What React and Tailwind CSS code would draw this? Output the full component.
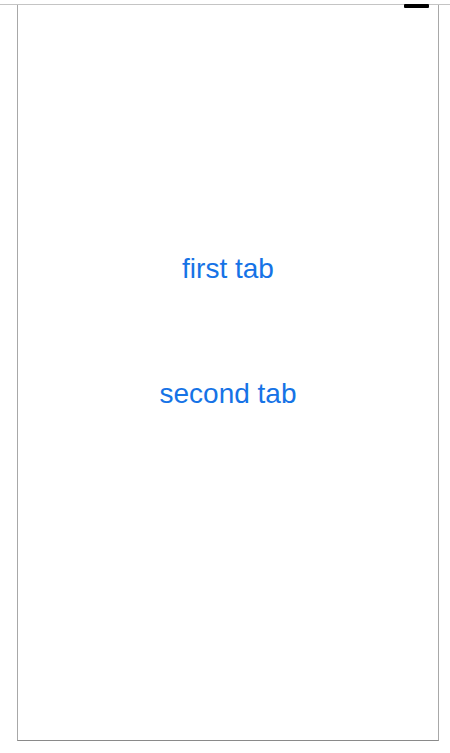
import React from 'react';

export default function App() {
  return (
    <div className="relative w-[450px] h-[753px] bg-white overflow-hidden" style={{ fontFamily: '"Liberation Sans", Arial, sans-serif' }}>
      {/* top rule */}
      <div className="mt-[4px] h-px bg-[#c4c4c4]" />

      {/* frame */}
      <div className="ml-[17px] w-[422px] h-[736px] border-x border-b border-x-[#a8a8a8] border-b-[#8a8a8a] flex flex-col items-center pt-[247px] gap-[91px]">
        <button className="text-[28px] leading-[34px] text-[#1673e6]">first tab</button>
        <button className="text-[28px] leading-[34px] text-[#1673e6]">second tab</button>
      </div>

      {/* little black bar top right */}
      <div className="absolute left-[404px] top-[4px] w-[25px] h-[4px] bg-black rounded-[1px]" />
    </div>
  );
}
